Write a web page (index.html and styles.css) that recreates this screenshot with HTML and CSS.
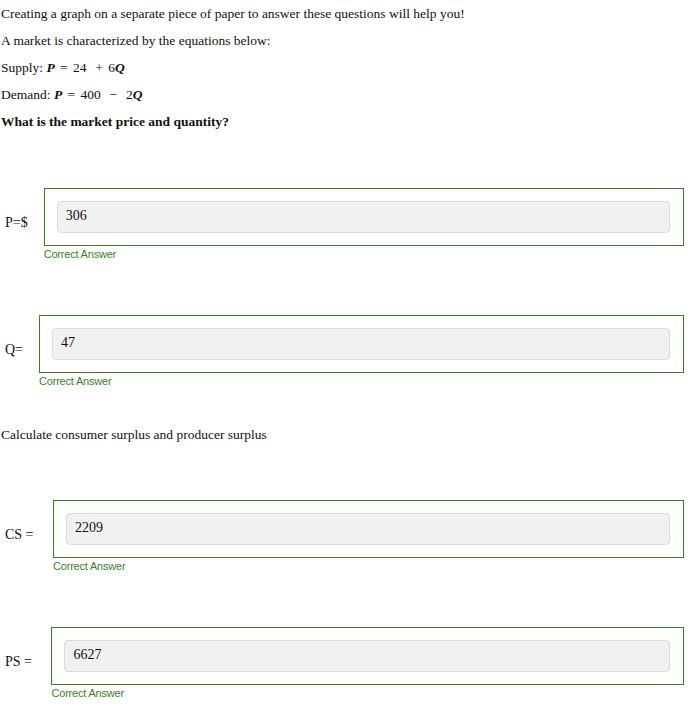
FILE: index.html
```html
<!DOCTYPE html>
<html lang="en">
<head>
<meta charset="utf-8">
<title>Market equilibrium</title>
<link rel="stylesheet" href="styles.css">
</head>
<body>
<div class="question">
  <p class="line">Creating a graph on a separate piece of paper to answer these questions will help you!</p>
  <p class="line">A market is characterized by the equations below:</p>
  <p class="line">Supply: <span class="math"><i class="var">P</i> <span class="op">=</span> 24 &nbsp;<span class="op">+</span> 6<i>Q</i></span></p>
  <p class="line">Demand: <span class="math"><i class="var">P</i> <span class="op">=</span> 400 &nbsp;<span class="op">&minus;</span>&nbsp; 2<i>Q</i></span></p>
  <p class="line strong">What is the market price and quantity?</p>

  <div class="answer first">
    <span class="label">P=$</span>
    <div class="field">
      <div class="box"><div class="input">306</div></div>
      <div class="feedback">Correct Answer</div>
    </div>
  </div>

  <div class="answer">
    <span class="label">Q=</span>
    <div class="field">
      <div class="box"><div class="input">47</div></div>
      <div class="feedback">Correct Answer</div>
    </div>
  </div>

  <p class="line section">Calculate consumer surplus and producer surplus</p>

  <div class="answer after-section">
    <span class="label">CS =&nbsp;</span>
    <div class="field">
      <div class="box"><div class="input">2209</div></div>
      <div class="feedback">Correct Answer</div>
    </div>
  </div>

  <div class="answer">
    <span class="label">PS =&nbsp;</span>
    <div class="field">
      <div class="box"><div class="input">6627</div></div>
      <div class="feedback">Correct Answer</div>
    </div>
  </div>
</div>
</body>
</html>
```

FILE: styles.css
```css
html, body {
  margin: 0;
  padding: 0;
  background: #ffffff;
}

body {
  font-family: "Liberation Serif", "Times New Roman", serif;
  font-size: 13.5px;
  color: #111111;
}

.question {
  padding: 0 15px 0 1px;
}

.line {
  margin: 0;
  line-height: 27px;
  height: 27px;
}

.strong {
  font-weight: bold;
}

.math i {
  font-style: italic;
  font-weight: bold;
}

.op {
  margin: 0 2px;
}

.answer {
  display: flex;
  align-items: flex-start;
}

.answer.first {
  margin-top: 53px;
}

.answer + .answer {
  margin-top: 53px;
}

.label {
  padding-left: 4px;
  margin-right: 16px;
  margin-top: 27px;
  line-height: 16px;
  font-size: 14px;
  white-space: nowrap;
}

.field {
  flex: 1;
}

.box {
  border: 1px solid #3a7d24;
  padding: 12px 13px 12px 12px;
}

.input {
  height: 30px;
  border: 1px solid #dcdcdc;
  border-radius: 4px;
  background: #f1f1f1;
  padding: 0 8px;
  line-height: 28px;
  font-size: 14px;
}

.feedback {
  font-family: "Liberation Sans", Arial, sans-serif;
  font-size: 11px;
  letter-spacing: -0.2px;
  color: #3c8127;
  line-height: 15px;
  padding-top: 1px;
}

.section {
  margin-top: 32px;
}

.answer.after-section {
  margin-top: 52px;
}
```
